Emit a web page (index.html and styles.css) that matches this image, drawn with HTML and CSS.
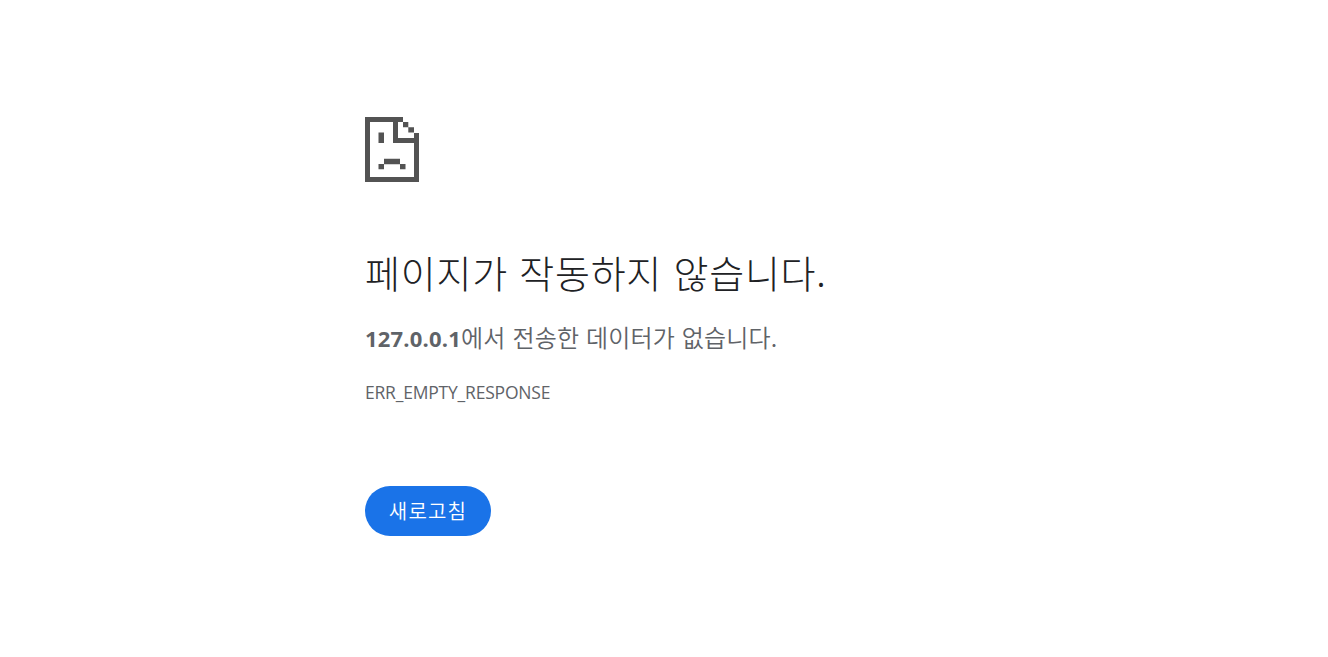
FILE: index.html
```html
<!DOCTYPE html>
<html lang="ko">
<head>
    <meta charset="UTF-8">
    <meta name="viewport" content="width=device-width, initial-scale=1.0">
    <title>127.0.0.1</title>
    <link rel="stylesheet" href="styles.css">
</head>
<body>

    <div class="container">
        <svg class="icon" width="54" height="65" viewBox="0 0 54 65" fill="#535353">
            <path d="M0 0H38V5H33V21H49V16H54V65H0ZM5 5V60H49V26H28V5Z" fill-rule="evenodd"/>
            <path d="M38 5H43.3V10.3H38ZM43.3 10.3H49V15.6H43.3Z"/>
            <path d="M13.5 15.6H19V26H13.5ZM19 41.8H35V47.3H19ZM13.5 47H19V52.3H13.5ZM35 47H40.5V52.3H35Z"/>
        </svg>
        <h1>페이지가 작동하지 않습니다.</h1>
        <p class="message"><strong>127.0.0.1</strong><span class="detail">에서 전송한 데이터가 없습니다.</span></p>
        <div class="error-code">ERR_EMPTY_RESPONSE</div>
        <button type="button" onclick="location.reload()">새로고침</button>
    </div>

</body>
</html>
```
FILE: styles.css
```css
body {
    margin: 0;
    background: #fff;
    color: #5f6368;
    font-family: "Open Sans", "Noto Sans CJK KR", sans-serif;
}
.container {
    width: 598px;
    margin: 0 auto;
    padding-top: 117px;
}
.icon {
    display: block;
}
h1 {
    margin: 65px 0 0;
    color: #202124;
    font-family: "Noto Sans CJK KR", sans-serif;
    font-size: 38px;
    font-weight: 300;
    line-height: 50px;
    letter-spacing: 0.75px;
    white-space: nowrap;
}
.message {
    margin: 23px 0 0;
    font-size: 22px;
    line-height: 34px;
    white-space: nowrap;
}
.message strong {
    letter-spacing: 0.2px;
}
.detail {
    font-family: "Noto Sans CJK KR", sans-serif;
    font-size: 24px;
    font-weight: 350;
    letter-spacing: 0.15px;
}
.error-code {
    margin-top: 25px;
    font-size: 17.5px;
    line-height: 24px;
    letter-spacing: -0.2px;
}
button {
    display: block;
    width: 126px;
    height: 50px;
    margin-top: 82px;
    padding: 0 0 2px;
    border: 0;
    border-radius: 25px;
    background: #1a73e8;
    color: #fff;
    font-family: "Noto Sans CJK KR", sans-serif;
    font-size: 20px;
    font-weight: 350;
    letter-spacing: 1.2px;
    cursor: pointer;
}
```
